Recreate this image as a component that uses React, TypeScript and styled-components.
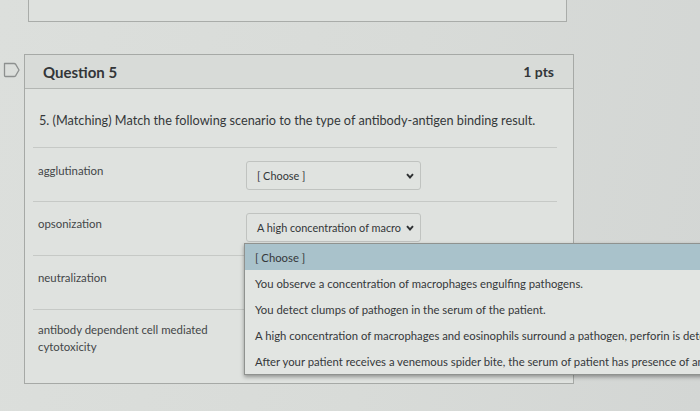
import React from "react";
import styled, { createGlobalStyle } from "styled-components";

const Global = createGlobalStyle`
  html, body { margin: 0; padding: 0; }
  body {
    background: #d7dad7;
    font-family: Lato, "Open Sans", "Liberation Sans", sans-serif;
    color: #3a3d3f;
    overflow: hidden;
    width: 700px;
    height: 411px;
  }
`;

const Page = styled.div`
  display: flex;
  flex-direction: column;
  width: 700px;
  height: 411px;
  background: linear-gradient(100deg, #dcdfdc 0%, #d8dbd8 55%, #d3d6d4 100%);
`;

const PrevCard = styled.div`
  margin-left: 28px;
  width: 539px;
  height: 22px;
  box-sizing: border-box;
  border: 1px solid #a9aca9;
  border-top: none;
  background: #dee1de;
`;

const QuestionRow = styled.div`
  display: flex;
  margin-top: 32px;
`;

const FlagCol = styled.div`
  width: 24px;
  display: flex;
  justify-content: flex-start;
  padding-top: 8px;
  padding-left: 2px;
  box-sizing: border-box;
`;

const Card = styled.div`
  width: 550px;
  height: 330px;
  box-sizing: border-box;
  border: 1px solid #a6a9a6;
  background: #dfe2df;
  display: flex;
  flex-direction: column;
`;

const Header = styled.div`
  height: 34px;
  box-sizing: border-box;
  display: flex;
  align-items: center;
  justify-content: space-between;
  padding: 0 19px 0 18px;
  background: #d8dbd8;
  border-bottom: 1px solid #b3b6b3;
  font-weight: 700;
  color: #333638;
`;

const Title = styled.span`
  font-size: 15px;
`;

const Points = styled.span`
  font-size: 14px;
`;

const Body = styled.div`
  padding: 23px 16px 0 8px;
  display: flex;
  flex-direction: column;
`;

const Prompt = styled.p`
  margin: 0 0 19px 6px;
  font-size: 12.7px;
  line-height: 16px;
  color: #35383a;
`;

const MatchRow = styled.div<{ $tall?: boolean }>`
  display: grid;
  grid-template-columns: 208px 175px;
  border-top: 1px solid #c6c9c6;
  height: ${(p) => (p.$tall ? "70px" : "54px")};
  box-sizing: border-box;
  padding-left: 5px;
`;

const Label = styled.div<{ $pt: number }>`
  padding-top: ${(p) => p.$pt}px;
  font-size: 11.4px;
  line-height: 17px;
  color: #434648;
`;

const SelectWrap = styled.div<{ $mt: number }>`
  position: relative;
  margin-top: ${(p) => p.$mt}px;
  height: 29px;
`;

const SelectBox = styled.div`
  height: 29px;
  box-sizing: border-box;
  border: 1px solid #c0c3c0;
  border-radius: 3px;
  background: #e0e3e0;
  display: flex;
  align-items: center;
  justify-content: space-between;
  padding: 0 6px 0 10px;
  font-size: 10.9px;
  color: #333638;
  white-space: nowrap;
`;

const Dropdown = styled.div`
  position: absolute;
  top: 30px;
  left: -2px;
  width: 470px;
  box-sizing: border-box;
  background: #e2e5e2;
  border: 1px solid #8f928f;
  box-shadow: 0 2px 4px rgba(0, 0, 0, 0.35);
  z-index: 5;
  display: flex;
  flex-direction: column;
`;

const Option = styled.div<{ $active?: boolean }>`
  height: 26px;
  display: flex;
  align-items: center;
  padding-left: 10px;
  font-size: 11.3px;
  white-space: nowrap;
  overflow: hidden;
  color: #35383a;
  background: ${(p) => (p.$active ? "#a9c2cb" : "transparent")};
`;

const Flag = () => (
  <svg width="20" height="16" viewBox="0 0 20 16" fill="none">
    <path
      d="M2.5 1.5 H12 Q13 1.5 13.7 2.3 L17 8 L13.7 13.7 Q13 14.5 12 14.5 H3.5 Q2.5 14.5 2.5 13.5 Z"
      stroke="#8d908f"
      strokeWidth="1.3"
      strokeLinejoin="round"
    />
  </svg>
);

const Chevron = () => (
  <svg width="8" height="6" viewBox="0 0 8 6">
    <path d="M1 1.2 L4 4.5 L7 1.2" stroke="#2e3133" strokeWidth="1.9" fill="none" />
  </svg>
);

const options = [
  "[ Choose ]",
  "You observe a concentration of macrophages engulfing pathogens.",
  "You detect clumps of pathogen in the serum of the patient.",
  "A high concentration of macrophages and eosinophils surround a pathogen, perforin is detected",
  "After your patient receives a venemous spider bite, the serum of patient has presence of antibodies",
];

export default function App() {
  return (
    <>
      <Global />
      <Page>
        <PrevCard />
        <QuestionRow>
          <FlagCol>
            <Flag />
          </FlagCol>
          <Card>
            <Header>
              <Title>Question 5</Title>
              <Points>1 pts</Points>
            </Header>
            <Body>
              <Prompt>
                5. (Matching) Match the following scenario to the type of antibody-antigen binding result.
              </Prompt>
              <MatchRow>
                <Label $pt={14}>agglutination</Label>
                <SelectWrap $mt={13}>
                  <SelectBox>
                    <span>[ Choose ]</span>
                    <Chevron />
                  </SelectBox>
                </SelectWrap>
              </MatchRow>
              <MatchRow>
                <Label $pt={13}>opsonization</Label>
                <SelectWrap $mt={11}>
                  <SelectBox>
                    <span>A high concentration of macro</span>
                    <Chevron />
                  </SelectBox>
                  <Dropdown>
                    {options.map((o, i) => (
                      <Option key={i} $active={i === 0}>
                        {o}
                      </Option>
                    ))}
                  </Dropdown>
                </SelectWrap>
              </MatchRow>
              <MatchRow>
                <Label $pt={13}>neutralization</Label>
                <div />
              </MatchRow>
              <MatchRow $tall>
                <Label $pt={11}>
                  antibody dependent cell mediated
                  <br />
                  cytotoxicity
                </Label>
                <div />
              </MatchRow>
            </Body>
          </Card>
        </QuestionRow>
      </Page>
    </>
  );
}
